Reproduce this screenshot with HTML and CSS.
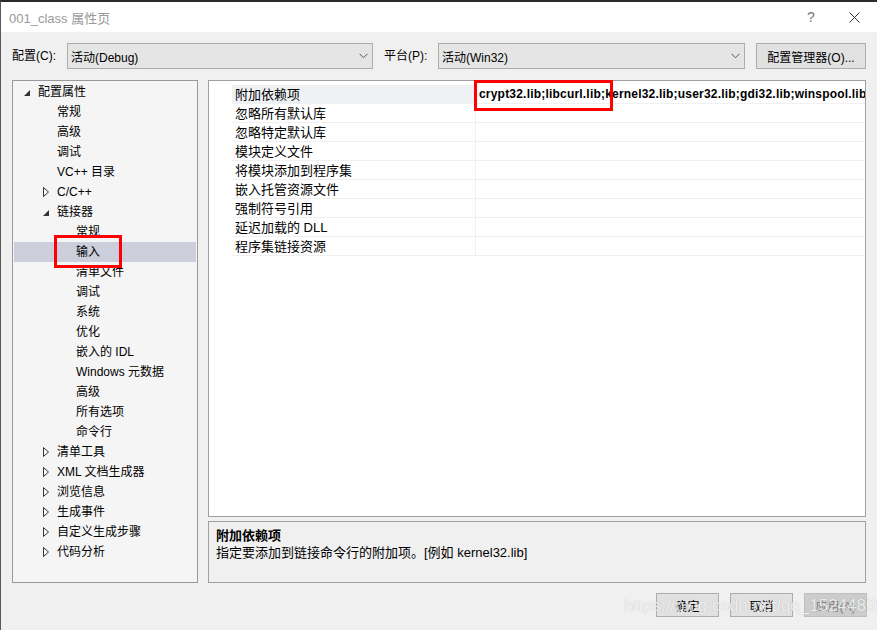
FILE: index.html
```html
<!DOCTYPE html>
<html lang="zh-CN">
<head>
<meta charset="utf-8">
<title>001_class 属性页</title>
<link rel="stylesheet" href="styles.css">
</head>
<body>
<div class="window">
  <div class="titlebar">
    <span class="title">001_class 属性页</span>
    <span class="help">?</span>
    <svg class="close" width="11" height="11" viewBox="0 0 11 11"><path d="M0.5 0.5 L10.5 10.5 M10.5 0.5 L0.5 10.5" stroke="#333" stroke-width="1" fill="none"/></svg>
  </div>

  <div class="toolbar">
    <span class="lbl lbl-cfg">配置(C):</span>
    <div class="combo combo-cfg"><span class="combo-text">活动(Debug)</span><svg class="chev" width="9" height="6" viewBox="0 0 9 6"><path d="M0.5 0.8 L4.5 4.8 L8.5 0.8" stroke="#555" stroke-width="1" fill="none"/></svg></div>
    <span class="lbl lbl-plat">平台(P):</span>
    <div class="combo combo-plat"><span class="combo-text">活动(Win32)</span><svg class="chev" width="9" height="6" viewBox="0 0 9 6"><path d="M0.5 0.8 L4.5 4.8 L8.5 0.8" stroke="#555" stroke-width="1" fill="none"/></svg></div>
    <button class="btn btn-mgr">配置管理器(O)...</button>
  </div>

  <div class="main">
    <div class="tree">
      <div class="node l0"><span class="tw"><svg width="15" height="20" viewBox="0 0 15 20"><path d="M1 14 L7 14 L7 8 Z" fill="#333"/></svg></span><span>配置属性</span></div>
      <div class="node l1"><span class="tw"></span><span>常规</span></div>
      <div class="node l1"><span class="tw"></span><span>高级</span></div>
      <div class="node l1"><span class="tw"></span><span>调试</span></div>
      <div class="node l1"><span class="tw"></span><span>VC++ 目录</span></div>
      <div class="node l1"><span class="tw"><svg width="15" height="20" viewBox="0 0 15 20"><path d="M1.5 5.5 L6.5 10 L1.5 14.5 Z" fill="none" stroke="#333" stroke-width="1"/></svg></span><span>C/C++</span></div>
      <div class="node l1"><span class="tw"><svg width="15" height="20" viewBox="0 0 15 20"><path d="M1 14 L7 14 L7 8 Z" fill="#333"/></svg></span><span>链接器</span></div>
      <div class="node l2"><span class="tw"></span><span>常规</span></div>
      <div class="node l2 selected"><span class="tw"></span><span>输入</span></div>
      <div class="node l2"><span class="tw"></span><span>清单文件</span></div>
      <div class="node l2"><span class="tw"></span><span>调试</span></div>
      <div class="node l2"><span class="tw"></span><span>系统</span></div>
      <div class="node l2"><span class="tw"></span><span>优化</span></div>
      <div class="node l2"><span class="tw"></span><span>嵌入的 IDL</span></div>
      <div class="node l2"><span class="tw"></span><span>Windows 元数据</span></div>
      <div class="node l2"><span class="tw"></span><span>高级</span></div>
      <div class="node l2"><span class="tw"></span><span>所有选项</span></div>
      <div class="node l2"><span class="tw"></span><span>命令行</span></div>
      <div class="node l1"><span class="tw"><svg width="15" height="20" viewBox="0 0 15 20"><path d="M1.5 5.5 L6.5 10 L1.5 14.5 Z" fill="none" stroke="#333" stroke-width="1"/></svg></span><span>清单工具</span></div>
      <div class="node l1"><span class="tw"><svg width="15" height="20" viewBox="0 0 15 20"><path d="M1.5 5.5 L6.5 10 L1.5 14.5 Z" fill="none" stroke="#333" stroke-width="1"/></svg></span><span>XML 文档生成器</span></div>
      <div class="node l1"><span class="tw"><svg width="15" height="20" viewBox="0 0 15 20"><path d="M1.5 5.5 L6.5 10 L1.5 14.5 Z" fill="none" stroke="#333" stroke-width="1"/></svg></span><span>浏览信息</span></div>
      <div class="node l1"><span class="tw"><svg width="15" height="20" viewBox="0 0 15 20"><path d="M1.5 5.5 L6.5 10 L1.5 14.5 Z" fill="none" stroke="#333" stroke-width="1"/></svg></span><span>生成事件</span></div>
      <div class="node l1"><span class="tw"><svg width="15" height="20" viewBox="0 0 15 20"><path d="M1.5 5.5 L6.5 10 L1.5 14.5 Z" fill="none" stroke="#333" stroke-width="1"/></svg></span><span>自定义生成步骤</span></div>
      <div class="node l1"><span class="tw"><svg width="15" height="20" viewBox="0 0 15 20"><path d="M1.5 5.5 L6.5 10 L1.5 14.5 Z" fill="none" stroke="#333" stroke-width="1"/></svg></span><span>代码分析</span></div>
    </div>

    <div class="right">
      <div class="grid">
        <div class="prow first"><span class="gut"></span><span class="pname">附加依赖项</span><span class="pval">crypt32.lib;libcurl.lib;kernel32.lib;user32.lib;gdi32.lib;winspool.lib;comdlg32.lib;advapi32.lib</span></div>
        <div class="prow"><span class="gut"></span><span class="pname">忽略所有默认库</span><span class="pval"></span></div>
        <div class="prow"><span class="gut"></span><span class="pname">忽略特定默认库</span><span class="pval"></span></div>
        <div class="prow"><span class="gut"></span><span class="pname">模块定义文件</span><span class="pval"></span></div>
        <div class="prow"><span class="gut"></span><span class="pname">将模块添加到程序集</span><span class="pval"></span></div>
        <div class="prow"><span class="gut"></span><span class="pname">嵌入托管资源文件</span><span class="pval"></span></div>
        <div class="prow"><span class="gut"></span><span class="pname">强制符号引用</span><span class="pval"></span></div>
        <div class="prow"><span class="gut"></span><span class="pname">延迟加载的 DLL</span><span class="pval"></span></div>
        <div class="prow"><span class="gut"></span><span class="pname">程序集链接资源</span><span class="pval"></span></div>
      </div>
      <div class="desc">
        <div class="desc-title">附加依赖项</div>
        <div class="desc-text">指定要添加到链接命令行的附加项。[例如 kernel32.lib]</div>
      </div>
    </div>
  </div>

  <div class="footer">
    <button class="btn fbtn">确定</button>
    <button class="btn fbtn">取消</button>
    <button class="btn fbtn disabled">应用(A)</button>
  </div>

  <div class="mark mark-tree"></div>
  <div class="mark mark-grid"></div>
  <div class="watermark">https://blog.csdn.net/qq_15244839</div>
</div>
</body>
</html>
```

FILE: styles.css
```css
* { box-sizing: border-box; }
html, body { margin: 0; padding: 0; }
body {
  background: #f0f0f0;
  font-family: "Liberation Sans", "Noto Sans CJK SC", sans-serif;
  font-size: 12px;
  color: #000;
}
.window {
  position: relative;
  width: 877px;
  height: 630px;
  border-top: 2px solid #2b2b2b;
  border-left: 1px solid #5a5a5a;
  background: #f0f0f0;
  overflow: hidden;
}
.titlebar {
  height: 30px;
  background: #fff;
  display: flex;
  align-items: center;
  padding-left: 8px;
}
.title { font-size: 13px; color: #9a9a9a; }
.help {
  margin-left: auto;
  width: 12px;
  text-align: center;
  font-size: 14px;
  color: #777;
  margin-right: 32px;
}
.close { margin-right: 17px; display: block; }

.toolbar {
  display: flex;
  align-items: center;
  padding: 11px 0 0 11px;
  height: 37px;
}
.lbl { line-height: 26px; }
.lbl-cfg { width: 55px; }
.lbl-plat { width: 54px; margin-left: 11px; }
.combo {
  height: 26px;
  border: 1px solid #acacac;
  background: #e5e5e5;
  display: flex;
  align-items: center;
  padding-left: 3px;
}
.combo-cfg { width: 306px; }
.combo-plat { width: 307px; }
.combo-text { flex: 1; }
.chev { margin-right: 4px; display: block; }
.btn {
  font-family: "Liberation Sans", "Noto Sans CJK SC", sans-serif;
  font-size: 12px;
  background: #e1e1e1;
  border: 1px solid #adadad;
  color: #000;
  padding: 0;
  margin: 0;
}
.btn-mgr { width: 110px; height: 26px; margin-left: 11px; }

.main {
  display: flex;
  margin-top: 11px;
  padding-left: 11px;
  height: 503px;
}
.tree {
  width: 186px;
  height: 503px;
  border: 1px solid #999;
  background: #f5f5f5;
  padding-top: 1px;
}
.node {
  display: flex;
  align-items: center;
  height: 20px;
  line-height: 20px;
  margin: 0 1px;
  white-space: nowrap;
}
.node.l0 { padding-left: 9px; }
.node.l1 { padding-left: 28px; }
.node.l2 { padding-left: 47px; }
.node.selected { background: #cccedb; }
.tw { width: 15px; height: 20px; flex: none; }
.tw svg { display: block; }

.right {
  width: 658px;
  margin-left: 10px;
  display: flex;
  flex-direction: column;
}
.grid {
  flex: 1;
  background: #fff;
  border: 1px solid #a0a0a0;
  padding-top: 4px;
  overflow: hidden;
}
.prow {
  display: flex;
  height: 19px;
  font-size: 13px;
}
.gut { width: 23px; flex: none; }
.pname {
  width: 244px;
  flex: none;
  padding-left: 3px;
  line-height: 19px;
  border-bottom: 1px solid #f0f0f0;
  border-right: 1px solid #f0f0f0;
  white-space: nowrap;
}
.prow.first .pname { background: #eff1f5; }
.pval {
  flex: 1;
  min-width: 0;
  padding-left: 3px;
  line-height: 18px;
  border-bottom: 1px solid #f0f0f0;
  font-size: 12px;
  font-weight: bold;
  letter-spacing: 0.2px;
  white-space: nowrap;
  overflow: hidden;
}
.desc {
  height: 62px;
  margin-top: 4px;
  border: 1px solid #a0a0a0;
  background: #f0f0f0;
  padding: 5px 7px;
  font-size: 13px;
  line-height: 17px;
}
.desc-title { font-weight: bold; }

.footer {
  display: flex;
  justify-content: flex-end;
  gap: 11px;
  margin-top: 10px;
  padding-right: 10px;
}
.fbtn { width: 63px; height: 24px; }
.fbtn.disabled { background: #cccccc; border-color: #bfbfbf; color: #838383; }

.mark {
  position: absolute;
  border: 3px solid #f00;
}
.mark-tree { left: 53px; top: 233px; width: 68px; height: 33px; }
.mark-grid { left: 473px; top: 78px; width: 139px; height: 31px; }
.watermark {
  position: absolute;
  left: 623px;
  top: 594px;
  font-family: "Liberation Sans", sans-serif;
  font-size: 17px;
  color: rgba(255, 255, 255, 0.82);
  text-shadow: 0 0 1px rgba(0, 0, 0, 0.25);
  white-space: nowrap;
  pointer-events: none;
}
```
